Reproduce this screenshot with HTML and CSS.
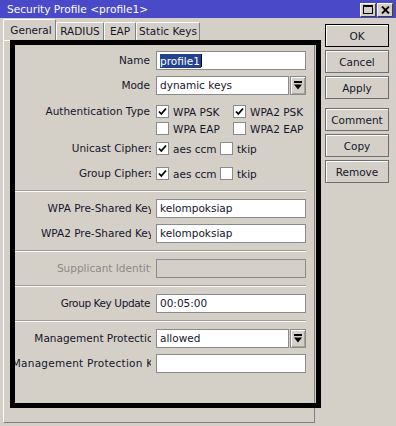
FILE: index.html
```html
<!DOCTYPE html>
<html lang="en">
<head>
    <meta charset="UTF-8">
    <meta name="viewport" content="width=device-width, initial-scale=1.0">
    <title>Security Profile</title>
    <link rel="stylesheet" href="styles.css">
</head>
<body>
    <div class="titlebar">
        <span class="title">Security Profile &lt;profile1&gt;</span>
        <div class="win-btns">
            <span class="win-btn"><svg width="10" height="9" viewBox="0 0 10 9"><rect x="0.5" y="0.5" width="9" height="8" fill="none" stroke="#000"/><rect x="0" y="0" width="10" height="2" fill="#000"/></svg></span>
            <span class="win-btn"><svg width="9" height="8" viewBox="0 0 9 8"><path d="M1 0.5 L8 7.5 M8 0.5 L1 7.5" stroke="#000" stroke-width="1.8"/></svg></span>
        </div>
    </div>

    <div class="window">
        <div class="sheet">
            <div class="tabs">
                <div class="tab active">General</div>
                <div class="tab radius">RADIUS</div>
                <div class="tab eap">EAP</div>
                <div class="tab keys">Static Keys</div>
            </div>
            <div class="panel">
                <div class="form">
                    <div class="row">
                        <div class="lbl"><span>Name</span></div>
                        <div class="field"><div class="input"><span class="selected">profile1</span><i class="caret"></i></div></div>
                    </div>
                    <div class="row">
                        <div class="lbl"><span>Mode</span></div>
                        <div class="field select">
                            <div class="input">dynamic keys</div>
                            <div class="drop"><svg width="8" height="9" viewBox="0 0 8 9"><rect x="0" y="0" width="8" height="2" fill="#000"/><path d="M0 3.5 H8 L4 8.5 Z" fill="#000"/></svg></div>
                        </div>
                    </div>
                    <div class="row auth">
                        <div class="lbl"><span>Authentication Type</span></div>
                        <div class="field checks">
                            <div class="cb-item"><span class="cb on"><svg width="9" height="9" viewBox="0 0 9 9"><path d="M1 4.5 L3.3 7 L8 1.5" fill="none" stroke="#000" stroke-width="1.8"/></svg></span>WPA PSK</div>
                            <div class="cb-item"><span class="cb on"><svg width="9" height="9" viewBox="0 0 9 9"><path d="M1 4.5 L3.3 7 L8 1.5" fill="none" stroke="#000" stroke-width="1.8"/></svg></span>WPA2 PSK</div>
                            <div class="cb-item"><span class="cb"></span>WPA EAP</div>
                            <div class="cb-item"><span class="cb"></span>WPA2 EAP</div>
                        </div>
                    </div>
                    <div class="row">
                        <div class="lbl"><span class="cut-4">Unicast Ciphers</span></div>
                        <div class="field checks ciphers">
                            <div class="cb-item"><span class="cb on"><svg width="9" height="9" viewBox="0 0 9 9"><path d="M1 4.5 L3.3 7 L8 1.5" fill="none" stroke="#000" stroke-width="1.8"/></svg></span>aes ccm</div>
                            <div class="cb-item"><span class="cb"></span>tkip</div>
                        </div>
                    </div>
                    <div class="row">
                        <div class="lbl"><span class="cut-4">Group Ciphers</span></div>
                        <div class="field checks ciphers">
                            <div class="cb-item"><span class="cb on"><svg width="9" height="9" viewBox="0 0 9 9"><path d="M1 4.5 L3.3 7 L8 1.5" fill="none" stroke="#000" stroke-width="1.8"/></svg></span>aes ccm</div>
                            <div class="cb-item"><span class="cb"></span>tkip</div>
                        </div>
                    </div>

                    <div class="sep"></div>

                    <div class="row">
                        <div class="lbl"><span class="cut-4">WPA Pre-Shared Key</span></div>
                        <div class="field"><div class="input">kelompoksiap</div></div>
                    </div>
                    <div class="row">
                        <div class="lbl"><span class="cut-4">WPA2 Pre-Shared Key</span></div>
                        <div class="field"><div class="input">kelompoksiap</div></div>
                    </div>

                    <div class="sep"></div>

                    <div class="row">
                        <div class="lbl disabled"><span class="cut-6">Supplicant Identity</span></div>
                        <div class="field"><div class="input off"></div></div>
                    </div>

                    <div class="sep"></div>

                    <div class="row">
                        <div class="lbl"><span class="narrow">Group Key Update</span></div>
                        <div class="field"><div class="input">00:05:00</div></div>
                    </div>

                    <div class="sep"></div>

                    <div class="row">
                        <div class="lbl"><span class="cut-10">Management Protection</span></div>
                        <div class="field select">
                            <div class="input">allowed</div>
                            <div class="drop"><svg width="8" height="9" viewBox="0 0 8 9"><rect x="0" y="0" width="8" height="2" fill="#000"/><path d="M0 3.5 H8 L4 8.5 Z" fill="#000"/></svg></div>
                        </div>
                    </div>
                    <div class="row">
                        <div class="lbl"><span class="cut-16 wide">Management Protection Key</span></div>
                        <div class="field"><div class="input"></div></div>
                    </div>
                </div>
            </div>
        </div>

        <div class="actions">
            <button class="btn default">OK</button>
            <button class="btn">Cancel</button>
            <button class="btn">Apply</button>
            <button class="btn spaced">Comment</button>
            <button class="btn">Copy</button>
            <button class="btn">Remove</button>
        </div>
    </div>

    <!-- black frame drawn over the General tab -->
    <div class="marker"></div>
</body>
</html>
```

FILE: styles.css
```css
* {margin: 0; padding: 0; box-sizing: border-box;}
body {background-color: #d4d0c8; color: #15152b; font-family: 'DejaVu Sans', sans-serif; font-size: 10.5px; width: 396px; height: 426px; overflow: hidden; position: relative;}

.titlebar {height: 18px; background-color: #4a4ac8; color: #FFFFFF; display: flex; align-items: center; justify-content: space-between; padding: 0 3px 0 7px;}
.titlebar .title {line-height: 18px; font-size: 10.6px;}
.win-btns {display: flex; gap: 1px; margin-top: 1px;}
.win-btn {width: 16px; height: 14px; background-color: #d4d0c8; border: 1px solid; border-color: #FFFFFF #404040 #404040 #FFFFFF; display: flex; align-items: center; justify-content: center;}

.window {display: flex; align-items: flex-start;}
.sheet {margin-left: 3px; width: 312px;}

.tabs {height: 22px; display: flex; align-items: flex-end;}
.tab {height: 18px; border: 1px solid; border-bottom: none; border-color: #FFFFFF #808080 #808080 #FFFFFF; border-radius: 2px 2px 0 0; text-align: center; line-height: 16px; white-space: nowrap;}
.tab.active {width: 53px; height: 21px; line-height: 20px; padding-left: 3px;}
.tab.radius {width: 48px;}
.tab.eap {width: 32px;}
.tab.keys {width: 64px;}

.panel {height: 383px; border: 1px solid; border-color: #FFFFFF #808080 #808080 #FFFFFF; padding: 10px 0 0 10px;}
.form {width: 292px;}
.row {display: flex; gap: 5px; height: 19px; align-items: center; margin-bottom: 6px;}
.row.auth {height: auto; align-items: flex-start; margin: 8px 0 2px;}
.lbl {width: 137px; flex-shrink: 0; display: flex; justify-content: flex-end; overflow: hidden; white-space: nowrap; padding-right: 1px; line-height: 17px;}
.lbl span {flex-shrink: 0;}
.lbl.disabled {color: #8c8a86;}
.lbl .cut-4 {margin-right: -4px;}
.lbl .cut-6 {margin-right: -6px;}
.lbl .cut-10 {margin-right: -10px;}
.lbl .cut-16 {margin-right: -16px;}
.lbl .narrow {letter-spacing: -0.4px;}
.lbl .wide {letter-spacing: 0.25px;}

.field {width: 150px; flex-shrink: 0; display: flex; align-items: center;}
.input {width: 100%; height: 19px; background-color: #FFFFFF; border: 1px solid #8a8a8a; padding-left: 3px; line-height: 17px; white-space: nowrap; overflow: hidden; display: flex; align-items: center;}
.input.off {background-color: transparent;}
.input .selected {background-color: #22428e; color: #FFFFFF; line-height: 14px; padding-right: 1px;}
.input .caret {width: 1px; height: 13px; background-color: #000000;}

.select {gap: 1px;}
.select .input {flex: 1;}
.drop {width: 16px; height: 19px; flex-shrink: 0; border: 1px solid #8a8a8a; box-shadow: inset 1px 1px 0 #FFFFFF, inset -1px -1px 0 #a8a49c; display: flex; align-items: center; justify-content: center;}

.checks {display: grid; grid-template-columns: 77px 73px; grid-auto-rows: 17px; align-items: center;}
.checks.ciphers {grid-template-columns: 64px 86px;}
.cb-item {display: flex; align-items: center; gap: 4px; white-space: nowrap;}
.cb {width: 13px; height: 13px; flex-shrink: 0; background-color: #FFFFFF; border: 1px solid #8a8a8a; display: flex; align-items: center; justify-content: center;}

.sep {height: 2px; border-top: 1px solid #a09c94; border-bottom: 1px solid #FFFFFF; margin: 7px 0;}

.actions {margin-left: 10px; padding-top: 6px; width: 64px; display: flex; flex-direction: column; gap: 3px;}
.btn {width: 64px; height: 23px; background-color: #d4d0c8; border: 1px solid #6e6e6e; box-shadow: inset 1px 1px 0 #FFFFFF; font: inherit; color: inherit; cursor: pointer;}
.btn.default {border-color: #000000;}
.btn.spaced {margin-top: 6px;}

.marker {position: absolute; left: 10px; top: 40px; width: 311px; height: 368px; border: 5px solid #000000; pointer-events: none;}
```
